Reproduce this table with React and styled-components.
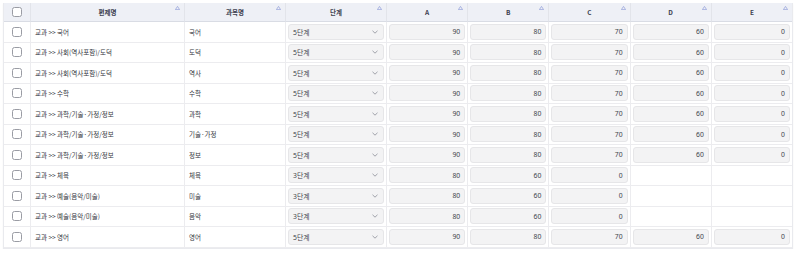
import React from "react";
import styled, { createGlobalStyle } from "styled-components";

const Global = createGlobalStyle`
  html, body { margin: 0; padding: 0; background: #fff; }
  body { font-family: "Noto Sans CJK KR", "Noto Sans", sans-serif; }
`;

const Page = styled.div`
  padding: 3px 7px 0 3px;
`;

const Grid = styled.div`
  display: grid;
  grid-template-columns: 26px 154px 101px 101px repeat(5, 1fr);
  width: 790px;
  border: 1px solid #e9eaee;
  border-top: none;
  box-sizing: border-box;
  box-shadow: 0 1px 2px rgba(0, 0, 0, 0.04);
`;

const HeadCell = styled.div`
  position: relative;
  height: 19px;
  background: #eef0f6;
  border-bottom: 1px solid #d9dce4;
  border-left: ${(p) => (p.$first ? "none" : "1px solid #e2e4ea")};
  box-sizing: border-box;
  display: flex;
  align-items: center;
  justify-content: center;
  font-size: 6.5px;
  font-weight: 700;
  color: #3d4150;
`;

const Sort = styled.svg`
  position: absolute;
  top: 3px;
  right: 4px;
`;

const Cell = styled.div`
  height: 20.5px;
  box-sizing: border-box;
  border-bottom: 1px solid #ececef;
  border-left: ${(p) => (p.$first ? "none" : "1px solid #ececef")};
  display: flex;
  align-items: center;
  justify-content: ${(p) => (p.$center ? "center" : "flex-start")};
  padding: ${(p) => (p.$pad ? "0 4px" : "0 2px")};
  font-size: 6.5px;
  color: #333640;
  white-space: nowrap;
`;

const Check = styled.span`
  width: 10px;
  height: 10px;
  border: 1px solid #9a9ca4;
  border-radius: 2.5px;
  background: #fff;
  box-sizing: border-box;
`;

const Box = styled.div`
  flex: 1;
  height: 16px;
  box-sizing: border-box;
  background: #f3f3f4;
  border: 1px solid #e6e6e8;
  border-radius: 3px;
  display: flex;
  align-items: center;
  justify-content: ${(p) => (p.$select ? "space-between" : "flex-end")};
  padding: 0 ${(p) => (p.$select ? "5px 0 4px" : "4px")};
  font-family: "Noto Sans", "Noto Sans CJK KR", sans-serif;
  font-size: 6.8px;
  color: #40434b;
`;

const Chevron = () => (
  <svg width="6" height="4" viewBox="0 0 6 4">
    <path d="M0.5 0.8 L3 3.2 L5.5 0.8" fill="none" stroke="#8a8d96" strokeWidth="0.8" />
  </svg>
);

const SortIcon = () => (
  <Sort width="5" height="4" viewBox="0 0 5 4">
    <path d="M2.5 0.4 L4.6 3.6 L0.4 3.6 Z" fill="none" stroke="#8e9bd8" strokeWidth="0.7" />
  </Sort>
);

const headers = ["편제명", "과목명", "단계", "A", "B", "C", "D", "E"];

const rows = [
  ["교과 >> 국어", "국어", "5단계", [90, 80, 70, 60, 0]],
  ["교과 >> 사회(역사포함)/도덕", "도덕", "5단계", [90, 80, 70, 60, 0]],
  ["교과 >> 사회(역사포함)/도덕", "역사", "5단계", [90, 80, 70, 60, 0]],
  ["교과 >> 수학", "수학", "5단계", [90, 80, 70, 60, 0]],
  ["교과 >> 과학/기술·가정/정보", "과학", "5단계", [90, 80, 70, 60, 0]],
  ["교과 >> 과학/기술·가정/정보", "기술·가정", "5단계", [90, 80, 70, 60, 0]],
  ["교과 >> 과학/기술·가정/정보", "정보", "5단계", [90, 80, 70, 60, 0]],
  ["교과 >> 체육", "체육", "3단계", [80, 60, 0]],
  ["교과 >> 예술(음악/미술)", "미술", "3단계", [80, 60, 0]],
  ["교과 >> 예술(음악/미술)", "음악", "3단계", [80, 60, 0]],
  ["교과 >> 영어", "영어", "5단계", [90, 80, 70, 60, 0]],
];

export default function App() {
  return (
    <>
      <Global />
      <Page>
        <Grid>
          <HeadCell $first>
            <Check />
          </HeadCell>
          {headers.map((h) => (
            <HeadCell key={h}>
              {h}
              <SortIcon />
            </HeadCell>
          ))}
          {rows.map(([path, subj, level, vals], i) => (
            <React.Fragment key={i}>
              <Cell $first $center>
                <Check />
              </Cell>
              <Cell $pad>{path}</Cell>
              <Cell $pad>{subj}</Cell>
              <Cell>
                <Box $select>
                  <span>{level}</span>
                  <Chevron />
                </Box>
              </Cell>
              {[0, 1, 2, 3, 4].map((k) => (
                <Cell key={k}>{vals[k] !== undefined && <Box>{vals[k]}</Box>}</Cell>
              ))}
            </React.Fragment>
          ))}
        </Grid>
      </Page>
    </>
  );
}
